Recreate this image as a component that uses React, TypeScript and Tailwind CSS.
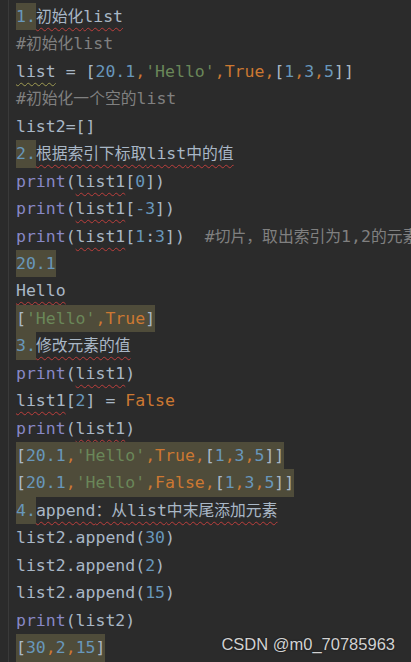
import React from "react";

type Tok = [string, string?];

const C: Record<string, string> = {
  d: "text-[#a9b7c6]",
  n: "text-[#6897bb]",
  s: "text-[#6a8759]",
  k: "text-[#cc7832]",
  p: "text-[#8888c6]",
  c: "text-[#808080]",
  w: "text-[#a9b7c6] underline decoration-wavy decoration-[#bc3f3c] underline-offset-[5px] decoration-1",
  y: "text-[#a9b7c6] underline decoration-wavy decoration-[#9f9b52] underline-offset-[5px] decoration-1",
};

const isCjk = (ch: string) => /[\u3000-\u9fff\uff00-\uffef]/.test(ch);

function Seg({ text, cls }: { text: string; cls: string }) {
  const parts: { t: string; cjk: boolean }[] = [];
  for (const ch of text) {
    const cj = isCjk(ch);
    const last = parts[parts.length - 1];
    if (last && last.cjk === cj) last.t += ch;
    else parts.push({ t: ch, cjk: cj });
  }
  return (
    <span className={cls}>
      {parts.map((p, i) =>
        p.cjk ? (
          <span key={i} className="text-[15.8px]">
            {p.t}
          </span>
        ) : (
          <React.Fragment key={i}>{p.t}</React.Fragment>
        )
      )}
    </span>
  );
}

function Line({ toks, hl }: { toks: Tok[]; hl?: number }) {
  const n = hl === undefined ? 0 : hl === -1 ? toks.length : hl;
  const head = toks.slice(0, n);
  const rest = toks.slice(n);
  return (
    <div className="flex h-[27.44px] items-stretch whitespace-pre">
      {n > 0 && (
        <span className="flex h-full items-center bg-[#4f4c3a]">
          <span>
            {head.map((t, i) => (
              <Seg key={i} text={t[0]} cls={C[t[1] ?? "d"]} />
            ))}
          </span>
        </span>
      )}
      <span className="flex h-full items-center">
        <span>
          {rest.map((t, i) => (
            <Seg key={i} text={t[0]} cls={C[t[1] ?? "d"]} />
          ))}
        </span>
      </span>
    </div>
  );
}

const listFull = (v: string): Tok[] => [
  ["["],
  ["20.1", "n"],
  [",", "k"],
  ["'Hello'", "s"],
  [",", "k"],
  [v, "k"],
  [",", "k"],
  ["["],
  ["1", "n"],
  [",", "k"],
  ["3", "n"],
  [",", "k"],
  ["5", "n"],
  ["]]"],
];

const lines: { toks: Tok[]; hl?: number }[] = [
  { toks: [["1.", "n"], ["初始化list", "w"]], hl: 1 },
  { toks: [["#初始化list", "c"]] },
  {
    toks: [
      ["list", "y"],
      [" = "],
      ["["],
      ["20.1", "n"],
      [",", "k"],
      ["'Hello'", "s"],
      [",", "k"],
      ["True", "k"],
      [",", "k"],
      ["["],
      ["1", "n"],
      [",", "k"],
      ["3", "n"],
      [",", "k"],
      ["5", "n"],
      ["]]"],
    ],
  },
  { toks: [["#初始化一个空的list", "c"]] },
  { toks: [["list2=[]"]] },
  { toks: [["2.", "n"], ["根据索引下标取list中的值", "w"]], hl: 1 },
  { toks: [["print", "p"], ["("], ["list1", "w"], ["["], ["0", "n"], ["])"]] },
  { toks: [["print", "p"], ["("], ["list1", "w"], ["["], ["-3", "n"], ["])"]] },
  {
    toks: [
      ["print", "p"],
      ["("],
      ["list1", "w"],
      ["["],
      ["1", "n"],
      [":"],
      ["3", "n"],
      ["])"],
      ["  #切片，取出索引为1,2的元素", "c"],
    ],
  },
  { toks: [["20.1", "n"]], hl: -1 },
  { toks: [["Hello", "w"]] },
  {
    toks: [["["], ["'Hello'", "s"], [",", "k"], ["True", "k"], ["]"]],
    hl: -1,
  },
  { toks: [["3.", "n"], ["修改元素的值", "w"]], hl: 1 },
  { toks: [["print", "p"], ["("], ["list1", "w"], [")"]] },
  {
    toks: [["list1", "w"], ["["], ["2", "n"], ["]"], [" = "], ["False", "k"]],
  },
  { toks: [["print", "p"], ["("], ["list1", "w"], [")"]] },
  { toks: listFull("True"), hl: -1 },
  { toks: listFull("False"), hl: -1 },
  { toks: [["4.", "n"], ["append：从list中末尾添加元素", "w"]], hl: 1 },
  { toks: [["list2.append("], ["30", "n"], [")"]] },
  { toks: [["list2.append("], ["2", "n"], [")"]] },
  { toks: [["list2.append("], ["15", "n"], [")"]] },
  { toks: [["print", "p"], ["(list2)"]] },
  {
    toks: [
      ["["],
      ["30", "n"],
      [",", "k"],
      ["2", "n"],
      [",", "k"],
      ["15", "n"],
      ["]"],
    ],
    hl: -1,
  },
];

export default function App() {
  return (
    <div className="relative w-[411px] h-[662px] overflow-hidden bg-[#2b2b2b]">
      <div className="flex h-full">
        <div className="w-[8px] shrink-0" />
        <div className="flex-1 border-l border-[#3a3a3a] pl-[7px] pt-[3px] font-['DejaVu_Sans_Mono','Noto_Sans_CJK_SC',monospace] text-[16.5px] leading-[27.44px] overflow-hidden">
          {lines.map((l, i) => (
            <Line key={i} toks={l.toks} hl={l.hl} />
          ))}
        </div>
      </div>
      <div className="absolute right-[16px] bottom-[10px] font-['Liberation_Sans',Arial,sans-serif] text-[16.5px] leading-none text-[#d2d2d2] [text-shadow:0_0_2px_rgba(0,0,0,0.6)]">
        CSDN @m0_70785963
      </div>
    </div>
  );
}
